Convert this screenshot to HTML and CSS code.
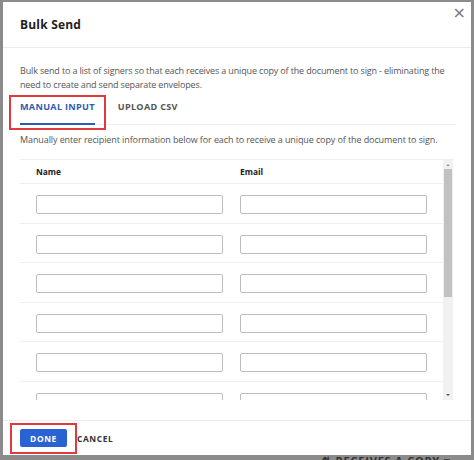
FILE: index.html
```html
<!DOCTYPE html>
<html lang="en">
<head>
    <meta charset="UTF-8">
    <meta name="viewport" content="width=device-width, initial-scale=1.0">
    <title>Bulk Send</title>
    <link rel="stylesheet" href="styles.css">
</head>
<body>

    <div class="modal">
        <div class="modal-header">
            <h2>Bulk Send</h2>
            <button class="close" aria-label="Close">&times;</button>
        </div>

        <div class="modal-body">
            <p class="intro">Bulk send to a list of signers so that each receives a unique copy of the document to sign - eliminating the need to create and send separate envelopes.</p>

            <div class="tabs">
                <div class="tab active marked">MANUAL INPUT</div>
                <div class="tab">UPLOAD CSV</div>
            </div>

            <p class="hint">Manually enter recipient information below for each to receive a unique copy of the document to sign.</p>

            <div class="grid-wrap">
                <div class="grid">
                    <div class="row head">
                        <div class="cell">Name</div>
                        <div class="cell">Email</div>
                    </div>
                    <div class="row"><div class="cell"><input type="text"></div><div class="cell"><input type="text"></div></div>
                    <div class="row"><div class="cell"><input type="text"></div><div class="cell"><input type="text"></div></div>
                    <div class="row"><div class="cell"><input type="text"></div><div class="cell"><input type="text"></div></div>
                    <div class="row"><div class="cell"><input type="text"></div><div class="cell"><input type="text"></div></div>
                    <div class="row"><div class="cell"><input type="text"></div><div class="cell"><input type="text"></div></div>
                    <div class="row"><div class="cell"><input type="text"></div><div class="cell"><input type="text"></div></div>
                </div>
                <div class="scrollbar">
                    <span class="arrow up"></span>
                    <span class="thumb"></span>
                    <span class="arrow down"></span>
                </div>
            </div>
        </div>

        <div class="modal-footer">
            <button class="btn primary marked">DONE</button>
            <button class="btn link">CANCEL</button>
        </div>
    </div>

    <div class="behind">&#8645; RECEIVES A COPY &#9662;</div>

</body>
</html>
```

FILE: styles.css
```css
/* Page behind the dialog */
body {
    margin: 0;
    height: 460px;
    overflow: hidden;
    background-color: #8b8b8b;
    font-family: 'Open Sans', 'Liberation Sans', sans-serif;
    color: #333;
}
/* Dialog box */
.modal {
    background-color: #ffffff;
    margin: 2px 3px 0 3px;
    height: 453px;
    display: flex;
    flex-direction: column;
}
.modal-header {
    height: 45px;
    border-bottom: 1px solid #ececec;
    padding: 0 17px;
    display: flex;
    align-items: center;
    position: relative;
}
.modal-header h2 {
    margin: 0;
    font-size: 12px;
    font-weight: 700;
    color: #222;
    letter-spacing: 0.2px;
}
.close {
    position: absolute;
    top: 3px;
    right: 5px;
    border: none;
    background: none;
    font-size: 16px;
    color: #777;
    padding: 0;
    font-family: 'DejaVu Sans', sans-serif;
    line-height: 16px;
}
.modal-body {
    flex: 1;
    padding: 0 9px 0 17px;
    overflow: hidden;
}
.intro {
    margin: 16px 0 0 0;
    font-size: 9px;
    letter-spacing: -0.15px;
    line-height: 14px;
    color: #555;
}
/* Tabs */
.tabs {
    display: flex;
    gap: 23px;
    margin-top: 5px;
    margin-right: 6px;
    border-bottom: 1px solid #eeeeee;
}
.tab {
    font-size: 9.1px;
    font-weight: 700;
    color: #555;
    padding: 3px 0 10px 0;
    letter-spacing: 0.3px;
}
.tab.active {
    color: #2d5cb0;
    border-bottom: 2px solid #2d5cb0;
    margin-bottom: -1px;
}
/* Red annotation frame */
.marked {
    position: relative;
}
.marked::after {
    content: "";
    position: absolute;
    border: 2px solid #e0393e;
    pointer-events: none;
}
.tab.marked::after {
    left: -11px;
    right: -11px;
    top: -2px;
    bottom: -7px;
}
.hint {
    margin: 8px 0 0 0;
    font-size: 9px;
    letter-spacing: -0.1px;
    line-height: 14px;
    color: #555;
}
/* Recipient table */
.grid-wrap {
    display: flex;
    margin-top: 12px;
    height: 240px;
    border-top: 1px solid #eeeeee;
    width: 433px;
}
.grid {
    width: 423px;
    overflow: hidden;
}
.row {
    display: flex;
    border-bottom: 1px solid #efefef;
    height: 38.5px;
}
.row.head {
    height: 23px;
    align-items: center;
}
.cell {
    width: 204px;
    padding-left: 16px;
    box-sizing: border-box;
}
.head .cell {
    font-size: 8.4px;
    font-weight: 700;
    color: #222;
}
.row .cell input {
    width: 187px;
    height: 19px;
    margin-top: 11px;
    box-sizing: border-box;
    border: 1px solid #bdbdbd;
    border-radius: 2px;
    padding: 0 4px;
}
.scrollbar {
    width: 10px;
    background-color: #f1f1f1;
    display: flex;
    flex-direction: column;
    align-items: center;
}
.thumb {
    width: 8px;
    height: 128px;
    background-color: #c1c1c1;
    margin-top: 3px;
}
.arrow {
    width: 0;
    height: 0;
    border-left: 2px solid transparent;
    border-right: 2px solid transparent;
}
.arrow.up {
    border-bottom: 2px solid #999;
    margin-top: 4px;
}
.arrow.down {
    border-top: 2px solid #555;
    margin-top: auto;
    margin-bottom: 4px;
}
/* Footer buttons */
.modal-footer {
    height: 34px;
    border-top: 1px solid #ececec;
    margin-top: 16px;
    padding: 0 17px;
    display: flex;
    align-items: center;
    gap: 10px;
}
.btn {
    font-family: 'Open Sans', 'Liberation Sans', sans-serif;
    font-size: 8.4px;
    font-weight: 700;
    letter-spacing: 0.6px;
    border: none;
    cursor: pointer;
}
.btn.primary {
    background-color: #2a62d3;
    color: #fff;
    width: 47px;
    height: 18px;
    border-radius: 2px;
    padding: 0;
}
.btn.primary::after {
    left: -10px;
    right: -10px;
    top: -6px;
    bottom: -7px;
}
.btn.link {
    background: none;
    color: #333;
    padding: 0;
}
.behind {
    margin-left: 322px;
    font-size: 11px;
    font-weight: 700;
    color: #333;
    letter-spacing: 0.8px;
    line-height: 12px;
}
```
